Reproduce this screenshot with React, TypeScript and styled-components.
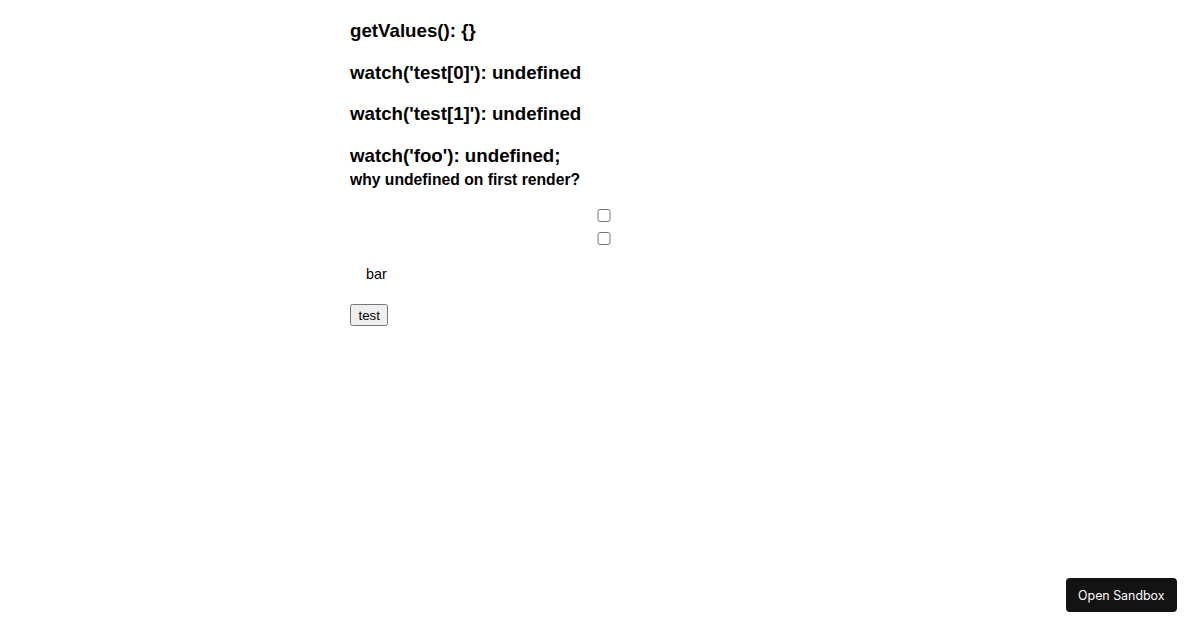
import React from "react";
import styled, { createGlobalStyle } from "styled-components";

const Global = createGlobalStyle`
  html, body { margin: 0; padding: 0; background: #fff; }
  body { font-family: "Liberation Sans", Arial, Helvetica, sans-serif; color: #000; }
`;

const Page = styled.div`
  width: 500px;
  margin: 0 auto;
  display: flow-root;
  padding-top: 0.4px;
`;

const Heading = styled.h3<{ $tight?: boolean }>`
  font-size: 18.72px;
  font-weight: bold;
  margin: ${(p) => (p.$tight ? "18.6px 0 0" : "18.6px 0")};
  line-height: 23px;
`;

const Note = styled.p`
  font-size: 15.7px;
  font-weight: bold;
  margin: 3px 0 19px;
  line-height: 20px;
`;

const Check = styled.input`
  display: block;
  width: 100%;
  height: 13px;
  margin: 3px 3px 10px 4px;
`;

const Label = styled.div`
  font-size: 14.3px;
  padding-left: 16px;
  margin: 21px 0 21px;
  line-height: 17px;
`;

const Button = styled.button`
  font-family: "Liberation Sans", Arial, sans-serif;
  font-size: 13.33px;
  padding: 2px 6.5px;
  height: 22px;
  margin: 0;
`;

const Sandbox = styled.a`
  position: fixed;
  right: 23px;
  bottom: 18px;
  background: #131313;
  color: #fff;
  font-family: "Inter", "Liberation Sans", sans-serif;
  font-size: 12.4px;
  border-radius: 4px;
  padding: 0 12.5px;
  height: 34px;
  display: flex;
  align-items: center;
  text-decoration: none;
`;

export default function App() {
  return (
    <>
      <Global />
      <Page>
        <Heading>getValues(): {"{}"}</Heading>
        <Heading>watch('test[0]'): undefined</Heading>
        <Heading>watch('test[1]'): undefined</Heading>
        <Heading $tight>watch('foo'): undefined;</Heading>
        <Note>why undefined on first render?</Note>
        <Check type="checkbox" />
        <Check type="checkbox" />
        <Label>bar</Label>
        <Button>test</Button>
      </Page>
      <Sandbox href="#">Open Sandbox</Sandbox>
    </>
  );
}
